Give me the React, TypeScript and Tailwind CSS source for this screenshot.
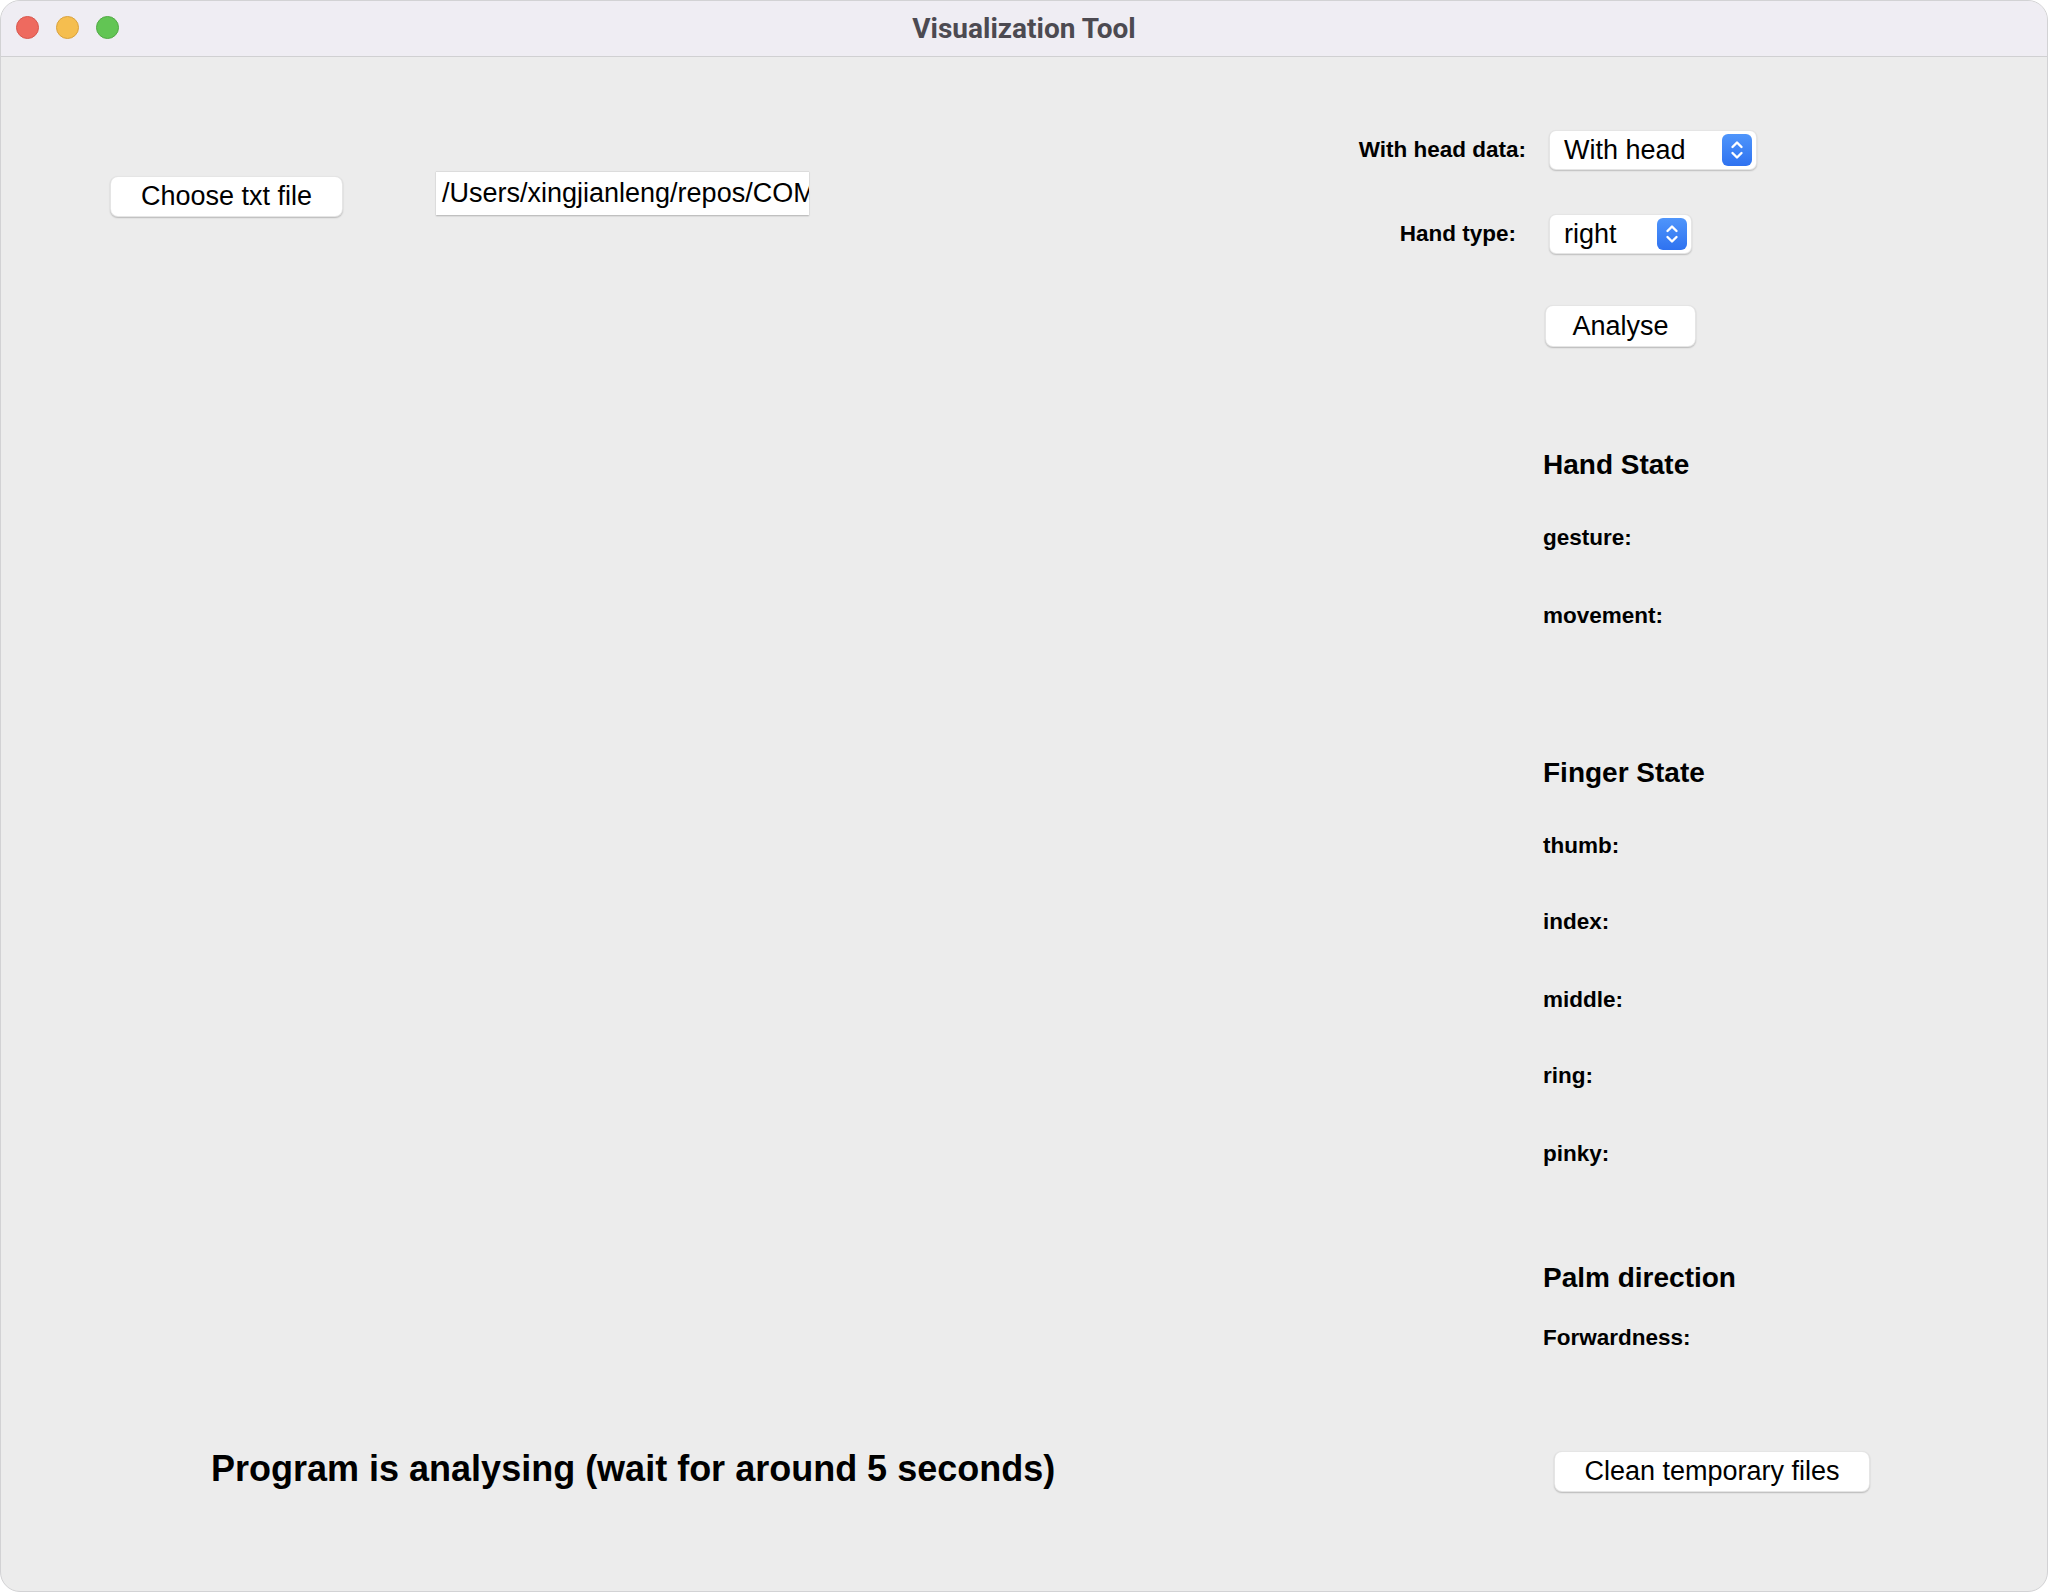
import { ReactNode } from 'react';

const sans = { fontFamily: '"Liberation Sans", Arial, sans-serif' };

function MacButton({ children, className }: { children: ReactNode; className?: string }) {
  return (
    <button
      className={`h-[41px] rounded-[8px] bg-white text-[27px] leading-none text-black border border-black/10 shadow-[0_1px_1.5px_rgba(0,0,0,0.22)] ${className ?? ''}`}
      style={sans}
    >
      {children}
    </button>
  );
}

function Stepper() {
  return (
    <div className="flex h-[32px] w-[30px] items-center justify-center rounded-[6px] bg-gradient-to-b from-[#4f95fb] to-[#2f72f0]">
      <svg width="16" height="24" viewBox="0 0 16 24" fill="none" stroke="white" strokeWidth="2.4" strokeLinecap="round" strokeLinejoin="round">
        <path d="M3.5 9 L8 4.5 L12.5 9" />
        <path d="M3.5 15 L8 19.5 L12.5 15" />
      </svg>
    </div>
  );
}

function Popup({ value, width }: { value: string; width: string }) {
  return (
    <div
      className={`flex h-[40px] items-center justify-between rounded-[7px] bg-white pl-[14px] pr-[4px] border border-black/10 shadow-[0_1px_1.5px_rgba(0,0,0,0.2)] ${width}`}
    >
      <span className="text-[27px] leading-none text-black" style={sans}>
        {value}
      </span>
      <Stepper />
    </div>
  );
}

function Label({ children, className }: { children: ReactNode; className?: string }) {
  return (
    <div className={`flex h-[30px] items-center text-[22.5px] font-bold text-black ${className ?? ''}`} style={sans}>
      {children}
    </div>
  );
}

function Heading({ children, className }: { children: ReactNode; className?: string }) {
  return (
    <div className={`flex h-[40px] items-center text-[28px] font-bold text-black ${className ?? ''}`} style={sans}>
      {children}
    </div>
  );
}

export default function App() {
  return (
    <div className="h-[1592px] w-[2048px] bg-white">
      <div className="flex h-full w-full flex-col overflow-hidden rounded-[20px] border border-[#d2d2d4] bg-[#ececec]">
        {/* title bar */}
        <div className="relative flex h-[56px] shrink-0 items-center justify-center border-b border-[#d0d0d2] bg-[#efedf3]">
          <div className="absolute left-[15px] top-[15px] flex gap-[17px]">
            <div className="h-[23px] w-[23px] rounded-full bg-[#ee6a5f] border border-[#d8574d]" />
            <div className="h-[23px] w-[23px] rounded-full bg-[#f5be4f] border border-[#d9a23c]" />
            <div className="h-[23px] w-[23px] rounded-full bg-[#62c554] border border-[#51a944]" />
          </div>
          <span className="text-[28px] font-bold text-[#4c4a51]" style={{ fontFamily: 'Roboto, "Liberation Sans", sans-serif' }}>
            Visualization Tool
          </span>
        </div>

        <div className="flex flex-1">
          {/* left column */}
          <div className="flex w-[1320px] flex-col">
            <div className="mt-[114px] flex items-start">
              <MacButton className="ml-[109px] mt-[5px] w-[233px]">Choose txt file</MacButton>
              <div className="ml-[93px] h-[44px] w-[373px] overflow-hidden border-t border-[#dcdcdc] bg-white shadow-[0_1px_1.5px_rgba(0,0,0,0.25)]">
                <div className="flex h-full items-center whitespace-nowrap pl-[6px] text-[27px] text-black" style={sans}>
                  /Users/xingjianleng/repos/COMP4560/data.txt
                </div>
              </div>
            </div>
            <div
              className="ml-[210px] mt-[1231px] flex h-[42px] items-center text-[36px] font-bold text-black"
              style={sans}
            >
              Program is analysing (wait for around 5 seconds)
            </div>
          </div>

          {/* right column */}
          <div className="flex flex-1 flex-col">
            <div className="mt-[73px] grid grid-cols-[205px_auto] items-center gap-x-[23px]">
              <Label className="justify-end">With head data:</Label>
              <Popup value="With head" width="w-[208px]" />
            </div>
            <div className="mt-[44px] grid grid-cols-[205px_auto] items-center gap-x-[23px]">
              <Label className="justify-end pr-[10px]">Hand type:</Label>
              <Popup value="right" width="w-[143px]" />
            </div>
            <div className="mt-[51px] pl-[224px]">
              <MacButton className="h-[42px] w-[151px]">Analyse</MacButton>
            </div>

            <div className="flex flex-col pl-[222px]">
              <Heading className="mt-[98px]">Hand State</Heading>
              <Label className="mt-[38px]">gesture:</Label>
              <Label className="mt-[48px]">movement:</Label>

              <Heading className="mt-[122px]">Finger State</Heading>
              <Label className="mt-[38px]">thumb:</Label>
              <Label className="mt-[46px]">index:</Label>
              <Label className="mt-[48px]">middle:</Label>
              <Label className="mt-[46px]">ring:</Label>
              <Label className="mt-[48px]">pinky:</Label>

              <Heading className="mt-[89px]">Palm direction</Heading>
              <Label className="mt-[25px]">Forwardness:</Label>

              <div className="mt-[98px] pl-[11px]">
                <MacButton className="h-[40px] w-[316px]">Clean temporary files</MacButton>
              </div>
            </div>
          </div>
        </div>
      </div>
    </div>
  );
}
